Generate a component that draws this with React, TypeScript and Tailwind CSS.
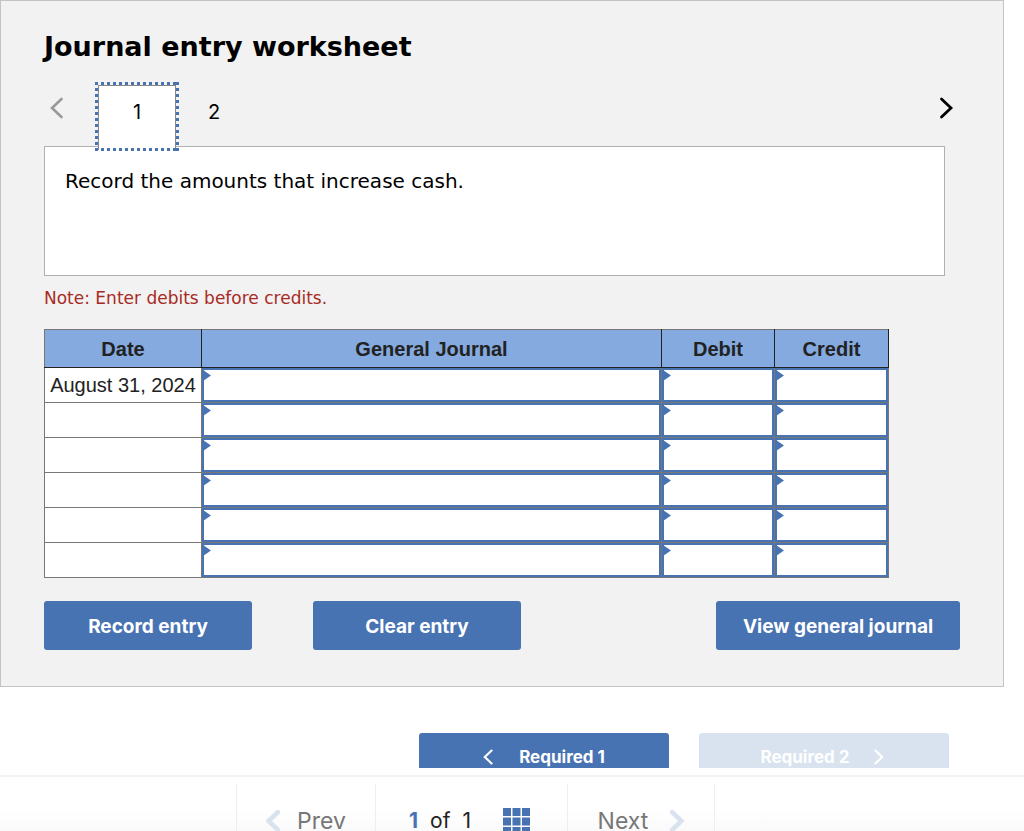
import React, { useState } from "react";

type ChevronProps = { direction: "left" | "right"; className?: string; stroke?: number };

function Chevron({ direction, className, stroke = 2 }: ChevronProps) {
  return (
    <svg viewBox="0 0 14 22" fill="none" stroke="currentColor" strokeWidth={stroke} strokeLinecap="round" className={className} aria-hidden="true">
      <path d={direction === "left" ? "M12 2 2.5 11l9.5 9" : "M2 2 11.5 11 2 20"} />
    </svg>
  );
}

function GridIcon() {
  return (
    <svg viewBox="0 0 27 27" className="h-[27px] w-[27px] text-[#4873b3]" fill="currentColor" aria-hidden="true">
      {[0, 9.5, 19].map((y) => [0, 9.5, 19].map((x) => <rect key={`${x}-${y}`} x={x} y={y} width="8" height="8" />))}
    </svg>
  );
}

function EntryCell({ label }: { label: string }) {
  return (
    <td className="relative border border-[#777] bg-white p-0">
      <input aria-label={label} className="block h-[34px] w-full border-2 border-[#4873b3] bg-white px-2 text-xl outline-none" />
      <svg viewBox="0 0 8 11" className="pointer-events-none absolute top-0.5 left-px h-[11px] w-2 text-[#4873b3]" fill="currentColor" aria-hidden="true">
        <path d="M0 0 8 5.5 0 11z" />
      </svg>
    </td>
  );
}

const dates = ["August 31, 2024", "", "", "", "", ""];
const buttonStyle = "h-[49px] rounded-[3px] bg-[#4873b3] pt-[3px] text-center font-['Inter',sans-serif] text-[19px] leading-6 font-bold text-white";

export default function App() {
  const [page, setPage] = useState(1);

  return (
    <div className="flex h-screen flex-col bg-white font-['DejaVu_Sans',sans-serif] text-black">
      <main className="min-h-0 flex-1 overflow-hidden">
        <section className="mr-5 border border-[#c4c4c4] bg-[#f2f2f2] pt-7 pr-[43px] pb-9 pl-[43px]">
          <h1 className="text-[27px] leading-9 font-bold">Journal entry worksheet</h1>
          <div className="mt-5 flex h-[61px] items-start font-['Inter',sans-serif] text-xl">
            <button aria-label="Previous entry" className="mt-[11px] ml-[5px] h-6 w-[15px] text-[#999]">
              <Chevron direction="left" stroke={2.6} className="h-[22px] w-[15px]" />
            </button>
            <button
              onClick={() => setPage(1)}
              className="relative z-10 ml-[34px] h-[65px] w-[78px] shrink-0 border border-b-0 border-[#888] bg-white pb-3"
            >
              1
              <svg className="pointer-events-none absolute -top-1 -left-1 h-[69px] w-[84px] text-[#4873b3]" viewBox="0 0 84 69" fill="none" stroke="currentColor" strokeWidth="3" strokeDasharray="3 3" aria-hidden="true">
                <path d="M0 1.5h84M0 67.5h84M1.5 0v69M82.5 0v69" />
              </svg>
            </button>
            <button onClick={() => setPage(2)} className="h-[65px] w-[76px] pb-3">2</button>
            <button aria-label="Next entry" className="mt-[11px] mr-1.5 ml-auto h-6 w-[15px] text-black">
              <Chevron direction="right" stroke={2.8} className="h-[22px] w-[15px]" />
            </button>
          </div>
          <div className="mr-[15px] h-[130px] border border-[#b0b0b0] bg-white px-5 py-5">
            <p className="text-xl leading-7">
              {page === 1 ? "Record the amounts that increase cash." : ""}
            </p>
          </div>
          <p className="mt-2 text-[17px] leading-7 text-[#a82a25]">Note: Enter debits before credits.</p>
          <div className="mt-[17px] pr-[71px]">
            <table className="w-full table-fixed border-collapse font-['Liberation_Sans',sans-serif] text-xl text-[#222]">
              <thead>
                <tr className="h-[38px] bg-[#84aadf]">
                  <th className="w-[157px] border border-[#222] border-t-[#777] border-l-[#777]">Date</th>
                  <th className="border border-[#222] border-t-[#777]">General Journal</th>
                  <th className="w-[113px] border border-[#222] border-t-[#777]">Debit</th>
                  <th className="w-[114px] border border-[#222] border-t-[#777]">Credit</th>
                </tr>
              </thead>
              <tbody>
                {dates.map((date, i) => (
                  <tr key={i} className="h-[35px]">
                    <td className="border border-[#777] bg-white p-0 text-center whitespace-nowrap">{date}</td>
                    <EntryCell label={`General journal, row ${i + 1}`} />
                    <EntryCell label={`Debit, row ${i + 1}`} />
                    <EntryCell label={`Credit, row ${i + 1}`} />
                  </tr>
                ))}
              </tbody>
            </table>
          </div>
          <div className="mt-[23px] flex">
            <button className={`${buttonStyle} w-52`}>Record entry</button>
            <button className={`${buttonStyle} ml-[61px] w-52`}>Clear entry</button>
            <button className={`${buttonStyle} ml-auto w-[244px]`}>View general journal</button>
          </div>
        </section>
        <div className="mt-[46px] mr-[75px] flex justify-end gap-[30px] font-['Inter',sans-serif] text-[17px] leading-5 font-bold text-white">
          <button className="flex h-12 w-[250px] items-center justify-center gap-[26px] rounded-[3px] bg-[#4873b3]">
            <Chevron direction="left" className="h-4 w-[10px]" stroke={3} />
            Required 1
          </button>
          <button disabled className="flex h-12 w-[250px] items-center justify-center gap-6 rounded-[3px] bg-[#d9e3ef] pr-1">
            Required 2
            <Chevron direction="right" className="h-4 w-[10px]" stroke={3} />
          </button>
        </div>
      </main>
      <footer className="mt-[7px] h-14 shrink-0 overflow-hidden border-t-2 border-[#f2f2f2] bg-linear-to-b from-white from-60% to-[#fafafa] pt-[7px] font-['Inter',sans-serif]">
        <nav className="ml-[236px] flex h-[74px] w-[479px] text-[23px] leading-5 text-[#777]">
          <button disabled className="flex w-[139px] items-center justify-center gap-[17px] border-l border-[#eee]">
            <Chevron direction="left" stroke={4.6} className="h-[22px] w-[14px] text-[#d9e3ef]" />
            Prev
          </button>
          <div className="flex w-[193px] items-center justify-center gap-8 border-x border-[#eee] pr-1 text-[21px] text-[#222]">
            <span className="flex gap-3"><b className="text-[#4873b3]">1</b><span>of</span><span>1</span></span>
            <button aria-label="Question list"><GridIcon /></button>
          </div>
          <button disabled className="flex w-[147px] items-center justify-center gap-[22px] border-r border-[#eee]">
            Next
            <Chevron direction="right" stroke={4.6} className="h-[22px] w-[14px] text-[#d9e3ef]" />
          </button>
        </nav>
      </footer>
    </div>
  );
}
